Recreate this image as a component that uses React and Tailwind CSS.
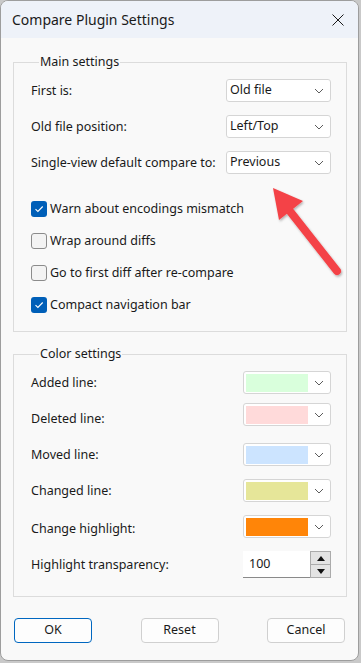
import React from 'react';

const Chevron = () => (
  <svg width="10" height="6" viewBox="0 0 10 6" className="shrink-0">
    <path d="M1 1l4 4 4-4" fill="none" stroke="#5c5c5c" strokeWidth="1" />
  </svg>
);

const Select = ({ value }) => (
  <div className="w-[105px] h-[23px] bg-white border border-[#d5d5d5] rounded-[3px] flex items-center justify-between pl-[3px] pr-[6px] shrink-0">
    <span className="text-[12.5px] text-[#1a1a1a]">{value}</span>
    <Chevron />
  </div>
);

const ColorPicker = ({ color }) => (
  <div className="w-[88px] h-[23px] bg-white border border-[#d5d5d5] rounded-[3px] flex items-center pl-[2px] pr-[6px] shrink-0">
    <div className="w-[62px] h-[18px]" style={{ backgroundColor: color }} />
    <div className="flex-1 flex justify-end">
      <Chevron />
    </div>
  </div>
);

const Checkbox = ({ checked, label }) => (
  <div className="flex items-center h-[20px] gap-[3px]">
    {checked ? (
      <div className="w-[16px] h-[16px] rounded-[3px] bg-[#005fb8] flex items-center justify-center">
        <svg width="10" height="8" viewBox="0 0 10 8">
          <path d="M1.5 4.2l2.4 2.3 4.8-5" fill="none" stroke="white" strokeWidth="1.1" />
        </svg>
      </div>
    ) : (
      <div className="w-[16px] h-[16px] rounded-[3px] bg-[#f3f3f3] border border-[#8b8b8b]" />
    )}
    <span className="text-[12.5px] text-[#1a1a1a]">{label}</span>
  </div>
);

const Row = ({ label, children, className = '', labelClass = '' }) => (
  <div className={`flex items-center justify-between h-[23px] ${className}`}>
    <span className={`text-[12.5px] leading-[15px] text-[#1a1a1a] ${labelClass}`}>{label}</span>
    {children}
  </div>
);

const Button = ({ children, primary }) => (
  <button
    className={`w-[78px] h-[25px] rounded-[4px] bg-[#fdfdfd] text-[12.5px] text-[#1a1a1a] border ${
      primary ? 'border-[#0067c0]' : 'border-[#d0d0d0]'
    }`}
  >
    {children}
  </button>
);

export default function App() {
  return (
    <div className="w-[361px] h-[663px] bg-[#c9c9c9] font-['Segoe_UI','Noto_Sans',sans-serif] overflow-hidden">
      <div className="relative w-[359px] h-[661px] bg-[#f9f9f9] border border-[#9d9d9d] rounded-[8px] overflow-hidden">
        {/* title bar */}
        <div className="h-[37px] bg-[#eef2f9] flex items-center justify-between pl-[11px] pr-[14px]">
          <span className="text-[14px] text-[#1a1a1a]">Compare Plugin Settings</span>
          <svg width="12" height="12" viewBox="0 0 12 12">
            <path d="M0.5 0.5l11 11M11.5 0.5l-11 11" stroke="#1a1a1a" strokeWidth="1" />
          </svg>
        </div>

        {/* main settings */}
        <fieldset className="mt-[16px] ml-[12px] w-[334px] border border-[#dcdcdc] pl-[17px] pr-[15px] pt-[9px] pb-[16px]">
          <legend className="ml-[8px] px-[1px] text-[12.5px] leading-[16px] text-[#1a1a1a]">Main settings</legend>
          <Row label="First is:">
            <Select value="Old file" />
          </Row>
          <Row label="Old file position:" className="mt-[13px]">
            <Select value="Left/Top" />
          </Row>
          <Row label="Single-view default compare to:" className="mt-[13px]">
            <Select value="Previous" />
          </Row>
          <div className="mt-[25px] flex flex-col gap-[12px]">
            <Checkbox checked label="Warn about encodings mismatch" />
            <Checkbox label="Wrap around diffs" />
            <Checkbox label="Go to first diff after re-compare" />
            <Checkbox checked label="Compact navigation bar" />
          </div>
        </fieldset>

        {/* color settings */}
        <fieldset className="mt-[14px] ml-[12px] w-[334px] border border-[#dcdcdc] pl-[17px] pr-[15px] pt-[9px] pb-[18px]">
          <legend className="ml-[8px] px-[1px] text-[12.5px] leading-[16px] text-[#1a1a1a]">Color settings</legend>
          <Row label="Added line:">
            <ColorPicker color="#d9ffdc" />
          </Row>
          <Row label="Deleted line:" className="mt-[9px]" labelClass="pt-[8px]">
            <ColorPicker color="#ffdada" />
          </Row>
          <Row label="Moved line:" className="mt-[17px]">
            <ColorPicker color="#cce4ff" />
          </Row>
          <Row label="Changed line:" className="mt-[13px]">
            <ColorPicker color="#e6e699" />
          </Row>
          <Row label="Change highlight:" className="mt-[13px]" labelClass="pt-[3px]">
            <ColorPicker color="#ff8508" />
          </Row>
          <div className="mt-[13px] flex items-center justify-between h-[27px]">
            <span className="text-[12.5px] leading-[15px] text-[#1a1a1a]">Highlight transparency:</span>
            <div className="flex h-[27px] shrink-0">
              <div className="w-[67px] h-[27px] bg-white border-b border-[#8a8a8a] flex items-center pl-[6px]">
                <span className="text-[12.5px] text-[#1a1a1a]">100</span>
              </div>
              <div className="w-[21px] h-[27px] bg-[#e3e3e3] border border-[#ababab] flex flex-col">
                <div className="flex-1 flex items-center justify-center border-b border-[#ababab]">
                  <svg width="8" height="5" viewBox="0 0 8 5">
                    <path d="M0 5L4 0L8 5Z" fill="#111" />
                  </svg>
                </div>
                <div className="flex-1 flex items-center justify-center">
                  <svg width="8" height="5" viewBox="0 0 8 5">
                    <path d="M0 0L8 0L4 5Z" fill="#111" />
                  </svg>
                </div>
              </div>
            </div>
          </div>
        </fieldset>

        {/* buttons */}
        <div className="mt-[21px] ml-[13px] w-[331px] flex justify-between">
          <Button primary>OK</Button>
          <Button>Reset</Button>
          <Button>Cancel</Button>
        </div>

        {/* red annotation arrow */}
        <svg className="absolute left-[259px] top-[177px]" width="90" height="105" viewBox="260 178 90 105">
          <defs>
            <filter id="sh" x="-20%" y="-20%" width="140%" height="140%">
              <feDropShadow dx="1" dy="1.5" stdDeviation="1.2" floodColor="#000" floodOpacity="0.3" />
            </filter>
          </defs>
          <g filter="url(#sh)">
            <line x1="289" y1="210" x2="337" y2="271" stroke="#f44246" strokeWidth="8" strokeLinecap="round" />
            <path d="M273 188L303 201L279 220Z" fill="#f44246" />
          </g>
        </svg>
      </div>
    </div>
  );
}
